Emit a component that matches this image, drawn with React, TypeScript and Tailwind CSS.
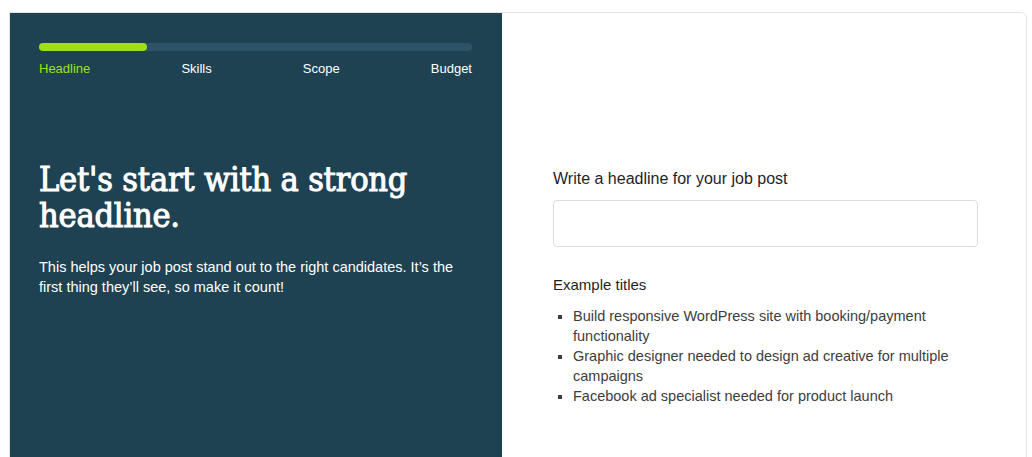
import React from 'react';

const steps = ['Headline', 'Skills', 'Scope', 'Budget'];

const examples = [
  'Build responsive WordPress site with booking/payment functionality',
  'Graphic designer needed to design ad creative for multiple campaigns',
  'Facebook ad specialist needed for product launch',
];

export default function App() {
  return (
    <div className="h-[457px] w-[1032px] overflow-hidden bg-white pl-[9px] pr-[5px] pt-[12px] font-['Liberation_Sans',Arial,sans-serif]">
      <div className="flex h-[460px] overflow-hidden rounded-tr-md border border-[#e4e4e4]">
        {/* Left panel */}
        <div className="w-[492px] shrink-0 bg-[#1f4252] pl-[29px] pr-[30px] pt-[30px]">
          <div className="h-[8px] w-full rounded-full bg-[#2d5366]">
            <div className="h-full w-[108px] rounded-full bg-[#9ee015]" />
          </div>
          <div className="mt-[8px] flex justify-between text-[13px] text-white">
            {steps.map((s, i) => (
              <span key={s} className={i === 0 ? 'text-[#9ee015]' : ''}>
                {s}
              </span>
            ))}
          </div>

          <h1 className="mt-[82px] font-['DejaVu_Serif_Condensed','DejaVu_Serif',Georgia,serif] text-[34px] leading-[36px] tracking-[-0.2px] text-white [-webkit-text-stroke:1px_white]">
            Let's start with a strong headline.
          </h1>
          <p className="mt-[24px] pr-[10px] text-[14.5px] leading-[20px] text-white">
            This helps your job post stand out to the right candidates. It’s the first thing they’ll see, so make it count!
          </p>
        </div>

        {/* Right panel */}
        <div className="flex-1 bg-white pl-[51px] pr-[48px] pt-[156px]">
          <label className="block text-[16px] leading-[20px] text-[#1f1f1f]">
            Write a headline for your job post
          </label>
          <input
            type="text"
            className="mt-[11px] h-[47px] w-full rounded-[4px] border border-[#dcdcdc] px-3 outline-none"
          />
          <div className="mt-[28px] text-[15px] leading-[20px] text-[#1f1f1f]">Example titles</div>
          <ul className="mt-[11px] text-[14.5px] leading-[20px] text-[#3d3d3d]">
            {examples.map((e) => (
              <li key={e} className="flex">
                <span className="w-[20px] shrink-0 pl-[5px]">
                  <span className="mt-[9px] block h-[4px] w-[4px] bg-[#3d3d3d]" />
                </span>
                <span>{e}</span>
              </li>
            ))}
          </ul>
        </div>
      </div>
    </div>
  );
}
